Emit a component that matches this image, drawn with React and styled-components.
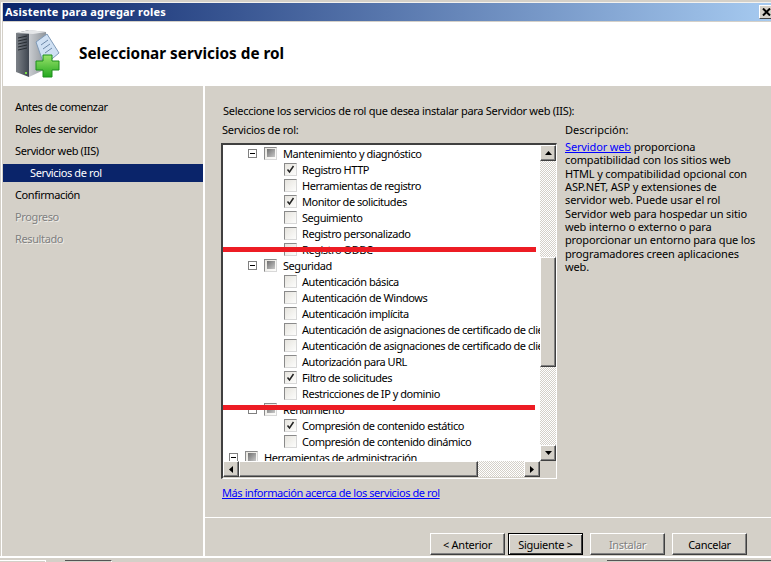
import React from 'react';
import styled, { createGlobalStyle } from 'styled-components';

const GRAY = '#d4d0c8';

const GlobalStyle = createGlobalStyle`
  html, body {
    margin: 0;
    padding: 0;
    width: 771px;
    height: 562px;
    overflow: hidden;
    background: ${GRAY};
  }
  body {
    font-family: "Noto Sans", Tahoma, sans-serif;
    font-size: 11px;
    letter-spacing: -0.28px;
    color: #000;
  }
`;

const Page = styled.div`
  width: 771px;
  height: 562px;
  display: flex;
  flex-direction: column;
  overflow: hidden;
  position: relative;
`;

const Frame = styled.div`
  flex: none;
  width: 790px;
  height: 558px;
  box-sizing: border-box;
  padding: 2px 0 0 1px;
  border-bottom: 2px solid #fff;
  display: flex;
  flex-direction: column;
`;

const FrameInner = styled.div`
  flex: 1;
  display: flex;
  flex-direction: column;
  border-left: 1px solid #fff;
  border-top: 1px solid #f4f2ee;
  padding-left: 1px;
  min-height: 0;
`;

const TitleBar = styled.div`
  height: 18px;
  flex: none;
  display: flex;
  align-items: center;
  padding: 0 0 2px 2px;
  width: 768px;
  box-sizing: border-box;
  background: linear-gradient(90deg, #0a246a, #a6caf0);
  color: #fff;
  font-weight: 700;
  font-size: 11px;
  letter-spacing: 0.2px;
  position: relative;
`;

const CloseButton = styled.div`
  position: absolute;
  left: 756px;
  top: 2px;
  width: 16px;
  height: 14px;
  box-sizing: border-box;
  background: ${GRAY};
  border-top: 1px solid #fff;
  border-left: 1px solid #fff;
  border-bottom: 1px solid #404040;
  display: flex;
  align-items: center;
  padding-left: 2px;
`;

const Header = styled.div`
  flex: none;
  height: 64px;
  margin-top: 1px;
  background: #fff;
  display: flex;
  align-items: center;
  padding-left: 12px;
  gap: 18px;
`;

const Heading = styled.h1`
  margin: 0 0 2px;
  font-size: 15.3px;
  font-weight: 700;
  letter-spacing: 0;
  white-space: nowrap;
`;

const Body = styled.div`
  flex: 1;
  min-height: 0;
  display: flex;
`;

const Sidebar = styled.nav`
  flex: none;
  width: 200px;
  border-right: 2px solid #fff;
  padding-top: 12px;
  display: flex;
  flex-direction: column;
  gap: 4px;
`;

const NavItem = styled.div`
  height: 18px;
  line-height: 18px;
  letter-spacing: -0.38px;
  padding-left: ${p => (p.$sub ? 27 : 12)}px;
  background: ${p => (p.$active ? '#0a246a' : 'transparent')};
  color: ${p => (p.$active ? '#fff' : p.$disabled ? '#808080' : '#000')};
  text-shadow: ${p => (p.$disabled ? '1px 1px 0 #efede8' : 'none')};
`;

const Main = styled.div`
  flex: none;
  width: 566px;
  display: flex;
  flex-direction: column;
`;

const Content = styled.div`
  flex: none;
  height: 432px;
  box-sizing: border-box;
  border-bottom: 1px solid #fff;
  padding: 17px 0 0 16px;
  display: flex;
  flex-direction: column;
`;

const Intro = styled.div`
  height: 16px;
  line-height: 16px;
  padding-left: 2px;
  white-space: nowrap;
`;

const Columns = styled.div`
  margin-top: 3px;
  display: flex;
  gap: 8px;
`;

const LeftColumn = styled.div`
  flex: none;
  width: 336px;
`;

const Label = styled.div`
  height: 16px;
  line-height: 16px;
  padding-left: ${p => (p.$flush ? 0 : 1)}px;
  margin-bottom: 5px;
  letter-spacing: ${p => (p.$flush ? 0 : -0.25)}px;
`;

const ListBox = styled.div`
  width: 336px;
  height: 336px;
  box-sizing: border-box;
  border-top: 2px solid #404040;
  border-left: 2px solid #404040;
  border-right: 1px solid #fff;
  border-bottom: 1px solid #fff;
  background: ${GRAY};
  display: grid;
  grid-template-columns: 317px 16px;
  grid-template-rows: 316px 16px;
  position: relative;
`;

const TreeView = styled.div`
  background: #fff;
  overflow: hidden;
  letter-spacing: -0.46px;
`;

const levelIndent = [6, 25, 61];

const Row = styled.div`
  height: 16px;
  display: flex;
  align-items: center;
  white-space: nowrap;
  padding-left: ${p => levelIndent[p.$level]}px;
`;

const Expander = styled.span`
  flex: none;
  width: 9px;
  height: 9px;
  box-sizing: border-box;
  border: 1px solid #808080;
  background: #fff;
  display: flex;
  align-items: center;
  justify-content: center;
  margin-right: 7px;
  &::before {
    content: '';
    width: 5px;
    height: 1px;
    background: #000;
  }
`;

const Box = styled.span`
  flex: none;
  width: 13px;
  height: 13px;
  box-sizing: border-box;
  border: 1px solid #8a8a8a;
  border-right-color: #d8d8d8;
  border-bottom-color: #d8d8d8;
  background: linear-gradient(135deg, #e6e4de, #fdfdfc);
  margin-right: 5px;
  display: flex;
  align-items: center;
  justify-content: center;
`;

const PartialBox = styled(Box)`
  margin-right: 6px;
  &::before {
    content: '';
    width: 8px;
    height: 8px;
    background: linear-gradient(135deg, #6f6f6f, #c8c8c8);
  }
`;

const ScrollButton = styled.div`
  box-sizing: border-box;
  background: ${GRAY};
  border: 1px solid;
  border-color: #fff #404040 #404040 #fff;
  box-shadow: inset -1px -1px 0 #808080;
  display: flex;
  align-items: center;
  justify-content: center;
`;

const Track = styled.div`
  background: repeating-conic-gradient(#fff 0 25%, ${GRAY} 0 50%) 0 0 / 2px 2px;
  display: flex;
  flex-direction: ${p => (p.$horizontal ? 'row' : 'column')};
`;

const VerticalBar = styled.div`
  display: grid;
  grid-template-rows: 16px 1fr 16px;
  min-height: 0;
`;

const HorizontalBar = styled.div`
  display: grid;
  grid-template-columns: 16px 1fr 16px;
  min-width: 0;
`;

const VerticalThumb = styled(ScrollButton)`
  margin-top: 96px;
  height: 110px;
`;

const HorizontalThumb = styled(ScrollButton)`
  width: 239px;
`;

const RedLine = styled.div`
  position: absolute;
  left: 0;
  top: ${p => p.$top}px;
  width: ${p => p.$width}px;
  height: 5px;
  background: #ed1c24;
`;

const Description = styled.div`
  flex: none;
  width: 200px;
`;

const DescriptionText = styled.div`
  line-height: 13.33px;
  margin-top: -3px;
  letter-spacing: -0.14px;
  white-space: nowrap;
`;

const Link = styled.a`
  color: #0000ff;
  text-decoration: underline;
`;

const MoreInfo = styled.div`
  margin-top: 6px;
  height: 16px;
  line-height: 16px;
  padding-left: 1px;
  letter-spacing: -0.41px;
`;

const Footer = styled.div`
  flex: 1;
  display: flex;
  padding: 15px 0 0 225px;
  gap: 3px;
`;

const Button = styled.div`
  flex: none;
  width: 75px;
  height: 22px;
  box-sizing: border-box;
  background: ${GRAY};
  margin-left: ${p => (p.$spaced ? 4 : 0)}px;
  border: 1px solid;
  border-color: ${p => (p.$primary ? '#000' : '#fff #404040 #404040 #fff')};
  box-shadow: ${p => (p.$primary ? 'inset 1px 1px 0 #fff, inset -1px -1px 0 #404040' : 'inset -1px -1px 0 #808080')};
  display: flex;
  align-items: center;
  justify-content: center;
  color: ${p => (p.$disabled ? '#808080' : '#000')};
  text-shadow: ${p => (p.$disabled ? '1px 1px 0 #fff' : 'none')};
`;

const TaskStrip = styled.div`
  flex: none;
  height: 2px;
  margin-top: 2px;
  display: flex;
`;

const TaskPiece = styled.div`
  flex: none;
  width: ${p => p.$width}px;
  margin-left: ${p => p.$offset}px;
  border-top: 1px solid ${p => p.$color};
  border-right: 1px solid #fff;
`;

const Arrow = ({ dir }) => {
  const paths = { up: 'M0 4 L3.5 0 L7 4Z', down: 'M0 0 L7 0 L3.5 4Z' };
  if (dir === 'left' || dir === 'right') {
    const d = dir === 'left' ? 'M4 0 L4 7 L0 3.5Z' : 'M0 0 L0 7 L4 3.5Z';
    return <svg width="4" height="7" viewBox="0 0 4 7"><path d={d} fill="#000" /></svg>;
  }
  return <svg width="7" height="4" viewBox="0 0 7 4"><path d={paths[dir]} fill="#000" /></svg>;
};

const Check = () => (
  <svg width="9" height="9" viewBox="0 0 9 9">
    <path d="M1.5 4.5 L3.5 7 L7.5 1" fill="none" stroke="#222" strokeWidth="1.5" />
  </svg>
);

const WizardIcon = () => (
  <svg width="46" height="50" viewBox="0 0 46 50">
    <defs>
      <linearGradient id="front" x1="0" y1="0" x2="1" y2="0">
        <stop offset="0" stopColor="#7d8288" />
        <stop offset="1" stopColor="#3f4650" />
      </linearGradient>
      <linearGradient id="side" x1="0" y1="0" x2="1" y2="0">
        <stop offset="0" stopColor="#c9ccd0" />
        <stop offset="1" stopColor="#8f959b" />
      </linearGradient>
      <linearGradient id="plus" x1="0" y1="0" x2="0" y2="1">
        <stop offset="0" stopColor="#9be36c" />
        <stop offset="1" stopColor="#23a81e" />
      </linearGradient>
    </defs>
    <path d="M1 4 L14 1 L14 48 L1 43Z" fill="url(#front)" />
    <path d="M14 1 L31 3 L31 40 L14 48Z" fill="url(#side)" />
    <path d="M1 4 L14 1 L31 3 L18 5Z" fill="#e4e6e8" />
    <path d="M3 9 L12 7 M3 12 L12 10 M3 15 L12 13 M3 18 L12 16 M3 21 L12 19" stroke="#262b31" strokeWidth="1" />
    <rect x="10" y="43" width="2" height="2" fill="#7be04a" />
    <path d="M21 13 L32 5 L44 24 L32 34 Q28 34 27 30Z" fill="#cfe0f3" stroke="#7f9ab8" strokeWidth="1" />
    <path d="M26 16 L33 11 M28 20 L35 15 M30 24 L37 19" stroke="#6d88a8" strokeWidth="1" />
    <path d="M28 26 L37 26 L37 32 L44 32 L44 41 L37 41 L37 48 L28 48 L28 41 L21 41 L21 32 L28 32Z" fill="url(#plus)" stroke="#1d8f1c" strokeWidth="1" />
  </svg>
);

const navItems = [
  { label: 'Antes de comenzar' },
  { label: 'Roles de servidor' },
  { label: 'Servidor web (IIS)' },
  { label: 'Servicios de rol', sub: true, active: true },
  { label: 'Confirmación' },
  { label: 'Progreso', disabled: true },
  { label: 'Resultado', disabled: true },
];

const treeRows = [
  { level: 1, label: 'Mantenimiento y diagnóstico' },
  { level: 2, label: 'Registro HTTP', checked: true },
  { level: 2, label: 'Herramientas de registro' },
  { level: 2, label: 'Monitor de solicitudes', checked: true },
  { level: 2, label: 'Seguimiento' },
  { level: 2, label: 'Registro personalizado' },
  { level: 2, label: 'Registro ODBC' },
  { level: 1, label: 'Seguridad' },
  { level: 2, label: 'Autenticación básica' },
  { level: 2, label: 'Autenticación de Windows' },
  { level: 2, label: 'Autenticación implícita' },
  { level: 2, label: 'Autenticación de asignaciones de certificado de cliente' },
  { level: 2, label: 'Autenticación de asignaciones de certificado de cliente de IIS' },
  { level: 2, label: 'Autorización para URL' },
  { level: 2, label: 'Filtro de solicitudes', checked: true },
  { level: 2, label: 'Restricciones de IP y dominio' },
  { level: 1, label: 'Rendimiento' },
  { level: 2, label: 'Compresión de contenido estático', checked: true },
  { level: 2, label: 'Compresión de contenido dinámico' },
  { level: 0, label: 'Herramientas de administración' },
];

const App = () => (
  <Page>
    <GlobalStyle />
    <Frame>
      <FrameInner>
        <TitleBar>
          Asistente para agregar roles
          <CloseButton>
            <svg width="9" height="8" viewBox="0 0 9 8">
              <path d="M1 0.5 L8 7.5 M8 0.5 L1 7.5" stroke="#000" strokeWidth="2" />
            </svg>
          </CloseButton>
        </TitleBar>
        <Header>
          <WizardIcon />
          <Heading>Seleccionar servicios de rol</Heading>
        </Header>
        <Body>
          <Sidebar>
            {navItems.map(item => (
              <NavItem key={item.label} $sub={item.sub} $active={item.active} $disabled={item.disabled}>
                {item.label}
              </NavItem>
            ))}
          </Sidebar>
          <Main>
            <Content>
              <Intro>Seleccione los servicios de rol que desea instalar para Servidor web (IIS):</Intro>
              <Columns>
                <LeftColumn>
                  <Label>Servicios de rol:</Label>
                  <ListBox>
                    <TreeView>
                      {treeRows.map((row, i) => (
                        <Row key={i} $level={row.level}>
                          {row.level < 2 && <Expander />}
                          {row.level < 2 ? <PartialBox /> : <Box>{row.checked && <Check />}</Box>}
                          {row.label}
                        </Row>
                      ))}
                    </TreeView>
                    <VerticalBar>
                      <ScrollButton><Arrow dir="up" /></ScrollButton>
                      <Track><VerticalThumb /></Track>
                      <ScrollButton><Arrow dir="down" /></ScrollButton>
                    </VerticalBar>
                    <HorizontalBar>
                      <ScrollButton><Arrow dir="left" /></ScrollButton>
                      <Track $horizontal><HorizontalThumb /></Track>
                      <ScrollButton><Arrow dir="right" /></ScrollButton>
                    </HorizontalBar>
                    <RedLine $top={102} $width={313} />
                    <RedLine $top={260} $width={312} />
                  </ListBox>
                  <MoreInfo><Link>Más información acerca de los servicios de rol</Link></MoreInfo>
                </LeftColumn>
                <Description>
                  <Label $flush>Descripción:</Label>
                  <DescriptionText>
                    <Link>Servidor web</Link> proporciona<br />
                    compatibilidad con los sitios web<br />
                    HTML y compatibilidad opcional con<br />
                    ASP.NET, ASP y extensiones de<br />
                    servidor web. Puede usar el rol<br />
                    Servidor web para hospedar un sitio<br />
                    web interno o externo o para<br />
                    proporcionar un entorno para que los<br />
                    programadores creen aplicaciones<br />
                    web.
                  </DescriptionText>
                </Description>
              </Columns>
            </Content>
            <Footer>
              <Button>&lt; Anterior</Button>
              <Button $primary>Siguiente &gt;</Button>
              <Button $disabled $spaced>Instalar</Button>
              <Button $spaced>Cancelar</Button>
            </Footer>
          </Main>
        </Body>
      </FrameInner>
    </Frame>
    <TaskStrip>
      <TaskPiece $width={45} $offset={0} $color="#fff" />
      <TaskPiece $width={46} $offset={19} $color="#555" />
      <TaskPiece $width={170} $offset={495} $color="#555" />
    </TaskStrip>
  </Page>
);

export default App;
